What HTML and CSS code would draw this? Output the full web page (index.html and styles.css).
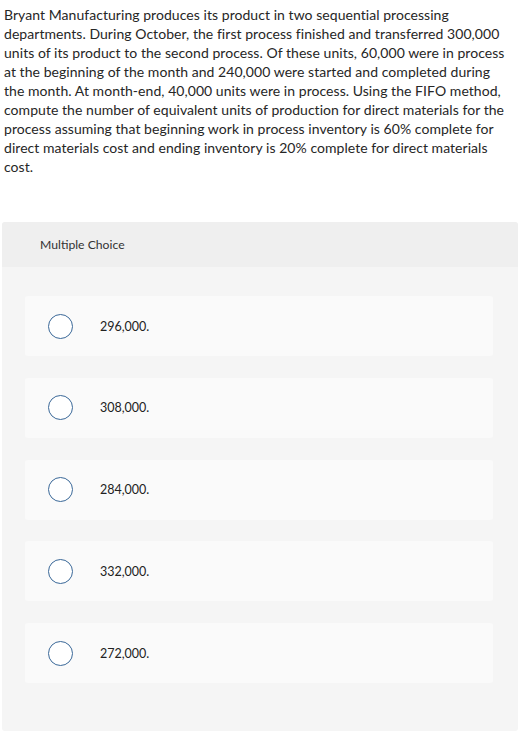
FILE: index.html
```html
<!DOCTYPE html>
<html lang="en">
<head>
<meta charset="utf-8">
<title>Multiple Choice</title>
<link rel="stylesheet" href="styles.css">
</head>
<body>
<div class="page">
  <p class="question">Bryant Manufacturing produces its product in two sequential processing departments. During October, the first process finished and transferred 300,000 units of its product to the second process. Of these units, 60,000 were in process at the beginning of the month and 240,000 were started and completed during the month. At month-end, 40,000 units were in process. Using the FIFO method, compute the number of equivalent units of production for direct materials for the process assuming that beginning work in process inventory is 60% complete for direct materials cost and ending inventory is 20% complete for direct materials cost.</p>
  <section class="panel">
    <div class="panel-head">Multiple Choice</div>
    <div class="panel-body">
      <div class="option"><span class="radio"></span><span class="label">296,000.</span></div>
      <div class="option"><span class="radio"></span><span class="label">308,000.</span></div>
      <div class="option"><span class="radio"></span><span class="label">284,000.</span></div>
      <div class="option"><span class="radio"></span><span class="label">332,000.</span></div>
      <div class="option"><span class="radio"></span><span class="label">272,000.</span></div>
    </div>
  </section>
</div>
</body>
</html>
```

FILE: styles.css
```css
html, body {
  margin: 0;
  padding: 0;
  background: #ffffff;
}
body {
  font-family: "Lato", "Open Sans", "Liberation Sans", sans-serif;
  color: #222222;
}
.page {
  width: 516px;
  margin-left: 2px;
}
.question {
  margin: 0;
  padding: 5px 7px 0 2px;
  font-size: 14px;
  letter-spacing: 0.05px;
  line-height: 19px;
  color: #262626;
}
.panel {
  margin-top: 46px;
  border-radius: 3px;
  overflow: hidden;
  background: #f5f5f5;
}
.panel-head {
  height: 45px;
  display: flex;
  align-items: center;
  padding-left: 38px;
  background: #efefef;
  font-size: 12.2px;
  color: #333333;
}
.panel-body {
  display: flex;
  flex-direction: column;
  gap: 21.75px;
  padding: 29px 25px 48px 23px;
}
.option {
  height: 60px;
  display: flex;
  align-items: center;
  background: #fafafa;
  border-radius: 3px;
  padding-left: 23px;
}
.radio {
  width: 25px;
  height: 25px;
  box-sizing: border-box;
  border: 1.5px solid #3a6898;
  border-radius: 50%;
  background: #ffffff;
  flex: none;
}
.label {
  margin-left: 27px;
  font-size: 12.5px;
  color: #222222;
}
```
